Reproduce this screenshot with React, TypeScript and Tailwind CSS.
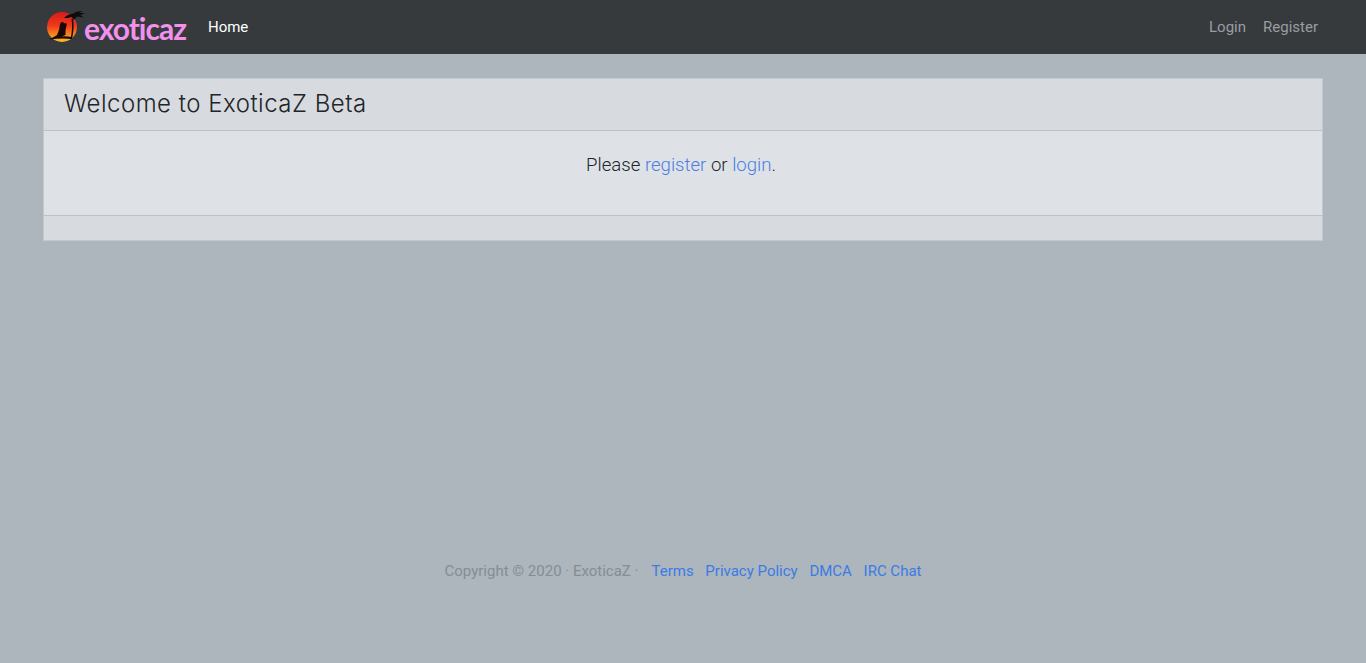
function Logo() {
  return (
    <svg width="40" height="34" viewBox="0 0 40 34" className="block">
      <defs>
        <linearGradient id="sun" x1="0" y1="0" x2="0" y2="1">
          <stop offset="0" stopColor="#d81a1c" />
          <stop offset="0.45" stopColor="#ee3a1a" />
          <stop offset="0.75" stopColor="#f7851f" />
          <stop offset="1" stopColor="#fcc026" />
        </linearGradient>
      </defs>
      <circle cx="15" cy="17" r="15" fill="url(#sun)" />
      {/* couple */}
      <path d="M5 28 L10 25 L12 20 L13 14 Q14 11.5 15.5 12 Q17 12 17 13.5 L19 13 Q20 14 19.5 16 L18.5 20 L18.5 25 L16 26 L12 28 Z" fill="#1a0707" />
      {/* ground */}
      <path d="M3 28.5 Q14 25 25 27 L25 29 Q14 28 3 29.5 Z" fill="#1a0707" />
      {/* trunk */}
      <path d="M24.5 9 Q26 18 23.5 29 L25 29 Q27.5 18 26 9 Z" fill="#140808" />
      {/* canopy */}
      <path d="M17 8 Q21 4 25 4 Q30 0.5 36 1 L32 2.5 L38 3.5 L33 5 L37 7.5 L30 6.5 L27 10 L24.5 7 L21 8 Z" fill="#0c0c0c" />
    </svg>
  );
}

export default function App() {
  return (
    <div className="min-h-[663px] bg-[#adb5bd] font-['Roboto',sans-serif] text-[15px] text-[#212529]">
      <nav className="flex h-[54px] items-center bg-[#363a3d] pl-[47px] pr-[48px]">
        <a href="#" className="flex items-center">
          <span className="-mr-[3px] -mt-[1px]">
            <Logo />
          </span>
          <span className="mt-[1px] font-['Lato',sans-serif] text-[30px] leading-none font-bold tracking-[-1px] text-[#f291ec]">
            exoticaz
          </span>
        </a>
        <a href="#" className="ml-[22px] text-white">
          Home
        </a>
        <div className="ml-auto flex gap-[17px] text-[#9a9da0]">
          <a href="#">Login</a>
          <a href="#">Register</a>
        </div>
      </nav>

      <main className="px-[43px] pt-[24px]">
        <div className="border border-[#c3c8cd] bg-[#dee2e6]">
          <div className="flex h-[52px] items-center border-b border-[#bcc1c6] bg-[#d7dade] px-[20px]">
            <h1 className="-mt-[2px] font-['Inter',sans-serif] text-[24px] font-light tracking-[0.5px] text-[#212529]">
              Welcome to ExoticaZ Beta
            </h1>
          </div>
          <div className="h-[84px] pt-[21px] pr-[4px] text-center text-[18.6px] leading-[27px] font-light">
            Please{" "}
            <a href="#" className="text-[#4a7ee2]">
              register
            </a>{" "}
            or{" "}
            <a href="#" className="text-[#4a7ee2]">
              login
            </a>
            .
          </div>
          <div className="h-[25px] border-t border-[#bcc1c6] bg-[#d7dade]" />
        </div>
      </main>

      <footer className="mt-[320px] flex justify-center leading-[20px] text-[#858d95]">
        <span className="mr-[13px]">Copyright © 2020 · ExoticaZ ·</span>
        <div className="flex gap-[11.7px] text-[#3b7be4]">
          <a href="#">Terms</a>
          <a href="#">Privacy Policy</a>
          <a href="#">DMCA</a>
          <a href="#">IRC Chat</a>
        </div>
      </footer>
    </div>
  );
}
